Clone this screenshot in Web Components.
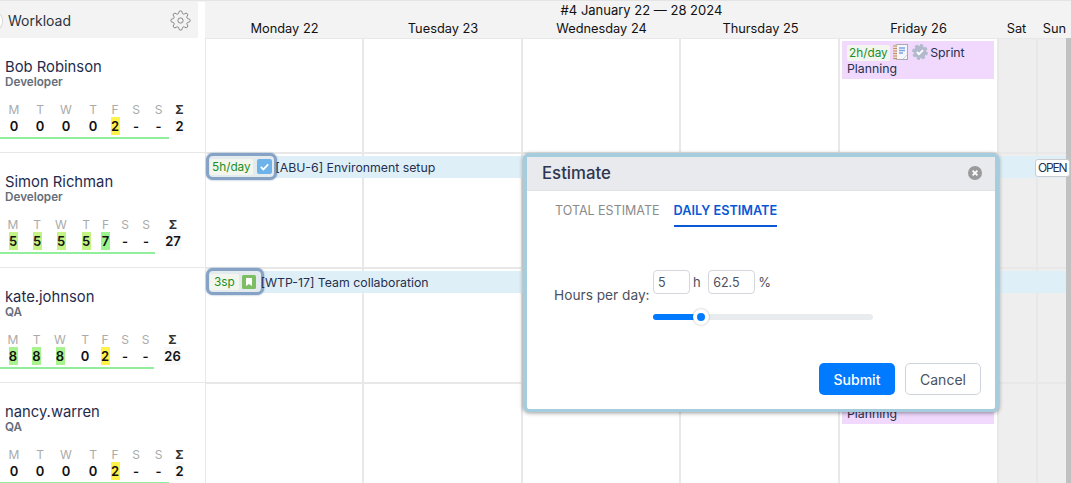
<!DOCTYPE html>
<html>
<head>
<meta charset="utf-8">
<title>Workload</title>
<style>
  html, body { margin: 0; padding: 0; width: 1071px; height: 483px; overflow: hidden; background: #fff; }
  body { font-family: Inter, "Liberation Sans", sans-serif; color: #1f2b4d; }
</style>
</head>
<body>
<workload-app></workload-app>
<script>
// column widths: header labels sit a little off the grid lines below them
var HEAD_COLS = "205px 159px 158px 159px 159px 157px 39px";
var DAY_COLS = "157px 159px 158px 159px 159px 39px";
var COLS = "205px " + DAY_COLS;

class WorkloadHeader extends HTMLElement {
  constructor() {
    super();
    this.attachShadow({ mode: "open" });
    var days = ["Monday 22", "Tuesday 23", "Wednesday 24", "Thursday 25", "Friday 26", "Sat", "Sun"];
    this.shadowRoot.innerHTML =
      '<style>' +
      ':host{display:grid;grid-template-columns:' + HEAD_COLS + ' 1fr;height:38px;background:#f3f3f3;border-top:1px solid #e4e4e4;box-sizing:border-box;position:relative;font-size:13px;color:#111}' +
      '.left{grid-row:1;grid-column:1;background:#f3f3f3;margin:1px 7px 0 1px;display:flex;align-items:center;justify-content:space-between;padding:0 7px;font-size:14px;color:#2c3340;position:relative}' +
      '.gap{position:absolute;right:-7px;top:0;bottom:0;width:7px;background:#fff}' +
      '.arc{position:absolute;left:-8px;top:11px;width:8px;height:14px;border:1px solid #d8d8d8;border-radius:50%;background:#fff}' +
      'svg{display:block}' +
      '.title{position:absolute;left:205px;right:0;top:1px;text-align:center;line-height:16px;padding-left:7px}' +
      '.d{grid-row:1;align-self:end;text-align:center;line-height:16px;padding-bottom:1px;font-size:12.8px}' +
      '.d:last-child{padding-left:2px}' +
      '</style>' +
      '<div class="left"><span>Workload</span><i class="arc"></i><i class="gap"></i>' +
      '<svg width="21" height="21" viewBox="0 0 24 24" fill="none" stroke="#777" stroke-width="1"><circle cx="12" cy="12" r="3"/><path d="M19.4 15a1.65 1.65 0 0 0 .33 1.82l.06.06a2 2 0 0 1 0 2.83 2 2 0 0 1-2.83 0l-.06-.06a1.65 1.65 0 0 0-1.82-.33 1.65 1.65 0 0 0-1 1.51V21a2 2 0 0 1-2 2 2 2 0 0 1-2-2v-.09A1.65 1.65 0 0 0 9 19.4a1.65 1.65 0 0 0-1.82.33l-.06.06a2 2 0 0 1-2.83 0 2 2 0 0 1 0-2.83l.06-.06a1.65 1.65 0 0 0 .33-1.82 1.65 1.65 0 0 0-1.51-1H3a2 2 0 0 1-2-2 2 2 0 0 1 2-2h.09A1.65 1.65 0 0 0 4.6 9a1.65 1.65 0 0 0-.33-1.82l-.06-.06a2 2 0 0 1 0-2.83 2 2 0 0 1 2.83 0l.06.06a1.65 1.65 0 0 0 1.82.33H9a1.65 1.65 0 0 0 1-1.51V3a2 2 0 0 1 2-2 2 2 0 0 1 2 2v.09a1.65 1.65 0 0 0 1 1.51 1.65 1.65 0 0 0 1.82-.33l.06-.06a2 2 0 0 1 2.83 0 2 2 0 0 1 0 2.83l-.06.06a1.65 1.65 0 0 0-.33 1.82V9a1.65 1.65 0 0 0 1.51 1H21a2 2 0 0 1 2 2 2 2 0 0 1-2 2h-.09a1.65 1.65 0 0 0-1.51 1z"/></svg></div>' +
      '<div class="title">#4 January 22 \u2014 28 2024</div>' +
      days.map(function (d, i) { return '<div class="d" style="grid-column:' + (i + 2) + '">' + d + '</div>'; }).join("");
  }
}
customElements.define("workload-header", WorkloadHeader);

class UserSummary extends HTMLElement {
  constructor() { super(); this.attachShadow({ mode: "open" }); }
  connectedCallback() {
    var vals = this.getAttribute("values").split(",");
    var cols = this.getAttribute("cols");
    var total = this.getAttribute("total");
    var letters = ["M", "T", "W", "T", "F", "S", "S"];
    var html = '<style>' +
      ':host{display:flex;align-items:flex-start;height:37px}' +
      '.days{display:grid;grid-template-columns:' + cols + ';border-bottom:2px solid #90ee9c;padding-bottom:2px;grid-template-rows:15px 18px}' +
      '.l{text-align:center;font-size:12px;color:#aaa;line-height:15px}' +
      '.v{text-align:center;font-size:13px;font-weight:600;color:#111;line-height:18px}' +
      '.v span{display:inline-block;min-width:9px;height:18px}' +
      '.y{background:#fff34a}.g{background:#c4f283}.s{background:#9bf58f}.e{background:#a8f38e}' +
      '.sum{text-align:center;width:' + this.getAttribute("sumw") + 'px;margin-left:' + this.getAttribute("sumgap") + 'px}' +
      '.sum b{display:block;font-size:12px;line-height:15px;color:#333}' +
      '.sum span{display:block;height:18px;line-height:18px;background:#f8f8f8;font-size:13px;font-weight:600;color:#111}' +
      '</style><div class="days">';
    letters.forEach(function (l) { html += '<div class="l">' + l + '</div>'; });
    vals.forEach(function (v) {
      var c = v === "2" ? "y" : v === "5" ? "g" : v === "7" ? "s" : v === "8" ? "e" : "";
      html += '<div class="v"><span class="' + c + '">' + v + '</span></div>';
    });
    html += '</div><div class="sum"><b>\u03a3</b><span>' + total + '</span></div>';
    this.shadowRoot.innerHTML = html;
  }
}
customElements.define("user-summary", UserSummary);

class WorkloadRow extends HTMLElement {
  constructor() {
    super();
    this.attachShadow({ mode: "open" });
    var cells = "";
    for (var i = 0; i < 7; i++) {
      cells += '<div class="c' + (i > 4 ? " we" : "") + (i === 0 ? " first" : "") + '" style="grid-column:' + (i + 2) + '"></div>';
    }
    this.shadowRoot.innerHTML =
      '<style>' +
      ':host{display:grid;grid-template-columns:' + COLS + ' 1fr;grid-template-rows:115px;font-family:Inter,"Liberation Sans",sans-serif}' +
      '.u{grid-column:1;grid-row:1;border-bottom:1px solid #e8e8e8;box-sizing:border-box;padding-top:21px}' +
      '.n{padding-left:5px;font-size:14.8px;line-height:16px;color:#1f2b4d}' +
      '.r{padding-left:5px;font-size:11.7px;font-weight:600;line-height:14px;color:#666d7a;margin-bottom:13px}' +
      '.c{grid-row:1;border-bottom:1px solid #e8e8e8;border-left:2px solid #e8e8e8;border-top:1px solid #e8e8e8;box-sizing:border-box}' +
      '.first{border-left-width:1px}' +
      '.we{background:#eee;border-left-color:#e8e8e8}' +
      '.e{grid-column:2/-1;grid-row:1;position:relative;display:grid;grid-template-columns:' + DAY_COLS + ' 1fr;align-items:start;align-content:start}' +
      '</style>' +
      '<div class="u"><div class="n"></div><div class="r"></div><slot name="summary"></slot></div>' +
      cells +
      '<div class="e"><slot></slot></div>';
  }
  connectedCallback() {
    this.shadowRoot.querySelector(".n").textContent = this.getAttribute("name");
    this.shadowRoot.querySelector(".r").textContent = this.getAttribute("role");
  }
}
customElements.define("workload-row", WorkloadRow);

class EstTag extends HTMLElement {
  constructor() {
    super();
    this.attachShadow({ mode: "open" });
    this.shadowRoot.innerHTML =
      '<style>:host{display:inline-block;font-size:11.8px;line-height:16px;color:#1b8f1f;background:#f2f6ee;padding:0 2px;border-radius:2px;white-space:nowrap}</style><slot></slot>';
  }
}
customElements.define("est-tag", EstTag);

class TaskBar extends HTMLElement {
  constructor() {
    super();
    this.attachShadow({ mode: "open" });
    this.shadowRoot.innerHTML =
      '<style>' +
      ':host{display:flex;align-items:center;grid-column:1/-1;height:22px;margin:3px 0 0 2px;background:#dfeff8;position:relative;font-size:12.3px;color:#25304f;white-space:nowrap}' +
      '.ring{display:flex;align-items:center;gap:3px;border:3px solid #86a2c5;border-radius:7px;background:#e3ebee;padding:0 2px 0 1px;margin:-3px var(--after,-1.5px) 0 -1px;height:21px;align-self:flex-start;box-shadow:0 0 2px #7f9cc0;flex:none}' +
      '.txt{padding-top:1px}' +
      '::slotted([slot=status]){position:absolute;right:-4px;top:3px}' +
      '</style><div class="ring"><slot name="tag"></slot><slot name="icon"></slot></div><span class="txt"><slot></slot></span><slot name="status"></slot>';
  }
}
customElements.define("task-bar", TaskBar);

class EventCard extends HTMLElement {
  constructor() {
    super();
    this.attachShadow({ mode: "open" });
    this.shadowRoot.innerHTML =
      '<style>:host{display:block;grid-column:5;margin:3px 3px 0 4px;background:#f0d9fd;padding:3px 5px 2px;height:38px;box-sizing:border-box;font-size:12.3px;line-height:16px;color:#25304f}' +
      'svg{vertical-align:-3px}</style>' +
      '<slot name="tag"></slot> ' +
      '<svg width="15" height="16" viewBox="0 0 15 16"><rect x="3" y=".5" width="11.5" height="15" fill="#f4f6fa" stroke="#a9a9b4"/><rect x=".5" y=".5" width="3" height="15" fill="#ecdccc"/><path d="M0 2h4M0 4.5h4M0 7h4M0 9.5h4M0 12h4M0 14.5h4" stroke="#c07a48" stroke-width=".8"/><path d="M6 4h6M6 6.5h6M6 9h4" stroke="#7ba5e6" stroke-width="1.5"/><path d="M10 15l4-4" stroke="#cfcfd8"/></svg> ' +
      '<svg width="16" height="16" viewBox="0 0 16 16" style="margin-right:-1px"><circle cx="8" cy="8" r="6.4" fill="#b3b9cc"/><circle cx="8" cy="8" r="6.9" fill="none" stroke="#b3b9cc" stroke-width="2" stroke-dasharray="3.2 2.2"/><path d="M4.8 8l2.2 2.2 4-4" fill="none" stroke="#fff" stroke-width="1.8"/></svg> ' +
      '<slot></slot>';
  }
}
customElements.define("event-card", EventCard);

class EstimateDialog extends HTMLElement {
  constructor() {
    super();
    this.attachShadow({ mode: "open" });
    this.shadowRoot.innerHTML =
      '<style>' +
      ':host{position:absolute;left:523px;top:153px;width:476px;height:259px;box-sizing:border-box;border:solid #a5cddd;border-width:4px 4px 3px 4px;border-radius:6px;background:#fff;box-shadow:0 1px 4px rgba(0,0,0,.4);font-family:Inter,"Liberation Sans",sans-serif;display:flex;flex-direction:column;color:#4a5160}' +
      '.head{background:#e9eaee;border-bottom:1px solid #e2e3e7;display:flex;align-items:center;justify-content:space-between;padding:0 13px 2px 15px;font-size:16.8px;font-weight:500;color:#2c3650;flex:none;height:31px}' +
      '.x{width:14px;height:14px;border-radius:50%;background:#9a9a9a;display:block}' +
      '.x svg{display:block}' +
      '.tabs{display:flex;gap:14px;padding:0 0 0 28px;height:36px;flex:none;font-size:12.5px;align-items:flex-end}' +
      '.tab{color:#8a8a8a;height:26px;line-height:20px;box-sizing:border-box;white-space:nowrap}' +
      '.tab.on{color:#0a58d6;font-weight:600;border-bottom:2px solid #0a58d6;font-size:12.7px}' +
      '.form{display:flex;align-items:flex-start;padding:43px 0 0 27px;font-size:13.7px;flex:none}' +
      '.lab{padding-top:17px;width:99px;line-height:16px;white-space:nowrap}' +
      '.in{display:flex;align-items:center;gap:3px}' +
      'input{width:37px;height:24px;box-sizing:border-box;border:1px solid #d5d7dc;border-radius:4px;font:12.5px Inter,"Liberation Sans",sans-serif;color:#4a5160;padding:0 4px;outline:none;background:#fff}' +
      'input.p{width:47px}' +
      '.u{margin-right:4.5px;margin-top:-1px;font-size:13px}' +
      '.slider{width:220px;height:6px;background:#e9ecef;border-radius:3px;margin-top:20px;position:relative}' +
      '.fill{width:48px;height:6px;background:#007bff;border-radius:3px}' +
      '.knob{position:absolute;left:40px;top:-5px;width:16px;height:16px;box-sizing:border-box;border:4px solid #fff;background:#007bff;border-radius:50%;box-shadow:0 0 2px rgba(0,0,0,.35)}' +
      '.foot{margin-top:auto;display:flex;justify-content:flex-end;gap:10px;padding:0 14px 14px 0}' +
      'button{width:76px;height:32px;border-radius:5px;font:500 14px Inter,"Liberation Sans",sans-serif;box-sizing:border-box;padding:0}' +
      '.pri{background:#007bff;border:0;color:#fff}' +
      '.sec{background:#fff;border:1px solid #cfd3dc;color:#4a5160;font-weight:400}' +
      '</style>' +
      '<div class="head"><span>Estimate</span><i class="x"><svg width="14" height="14" viewBox="0 0 14 14"><path d="M4.6 4.6l4.8 4.8M9.4 4.6l-4.8 4.8" stroke="#fff" stroke-width="1.8"/></svg></i></div>' +
      '<div class="tabs"><div class="tab">TOTAL ESTIMATE</div><div class="tab on">DAILY ESTIMATE</div></div>' +
      '<div class="form"><div class="lab">Hours per day:</div><div>' +
      '<div class="in"><input value="5"><span class="u">h</span><input class="p" value="62.5"><span class="u">%</span></div>' +
      '<div class="slider"><div class="fill"></div><div class="knob"></div></div>' +
      '</div></div>' +
      '<div class="foot"><button class="pri">Submit</button><button class="sec">Cancel</button></div>';
  }
}
customElements.define("estimate-dialog", EstimateDialog);

class WorkloadApp extends HTMLElement {
  constructor() {
    super();
    this.attachShadow({ mode: "open" });
    var sprint = '<event-card><est-tag slot="tag">2h/day</est-tag><span>Sprint</span> <span>Planning</span></event-card>';
    var checkIcon = '<svg slot="icon" width="15" height="15" viewBox="0 0 15 15" style="margin-left:1px"><rect width="15" height="15" rx="2" fill="#6db3ea"/><path d="M3.8 7.8l2.6 2.6 4.8-5" fill="none" stroke="#fff" stroke-width="1.8"/></svg>';
    var storyIcon = '<svg slot="icon" width="14" height="14" viewBox="0 0 14 14" style="margin-right:3px"><rect width="14" height="14" rx="1.5" fill="#7dbd63"/><path d="M4 3h6v8l-3-2-3 2z" fill="#fff"/></svg>';
    this.shadowRoot.innerHTML =
      '<style>' +
      ':host{display:block;width:1071px;height:483px;position:relative;overflow:hidden}' +
      '.body{display:flex;height:445px;overflow:hidden}' +
      '.rows{width:1066px;flex:none}' +
      '.scroll{flex:1;background:#c1c1c1}' +
      'span.open{font-size:12px;letter-spacing:-1.2px;line-height:16px;background:#fff;border:1px solid #ccc;border-radius:3px;color:#25304f;width:33px;overflow:hidden;display:block;text-indent:2px}' +
      '</style>' +
      '<workload-header></workload-header>' +
      '<div class="body"><div class="rows">' +
      '<workload-row name="Bob Robinson" role="Developer">' + sprint +
      '<user-summary slot="summary" values="0,0,0,0,2,-,-" total="2" cols="28px 24px 28px 26px 18px 24px 21px" sumw="9" sumgap="6"></user-summary></workload-row>' +
      '<workload-row name="Simon Richman" role="Developer">' +
      '<task-bar><est-tag slot="tag">5h/day</est-tag>' + checkIcon + '[ABU-6] Environment setup<span slot="status" class="open">OPEN</span></task-bar>' +
      '<user-summary slot="summary" values="5,5,5,5,7,-,-" total="27" cols="26px 22px 26px 24px 15px 24px 18px" sumw="16" sumgap="10"></user-summary></workload-row>' +
      '<workload-row name="kate.johnson" role="QA">' +
      '<task-bar style="--after:-3.3px"><est-tag slot="tag" style="padding:0 4px">3sp</est-tag>' + storyIcon + '[WTP-17] Team collaboration</task-bar>' +
      '<user-summary slot="summary" values="8,8,8,0,2,-,-" total="26" cols="26px 21px 26px 24px 16px 24px 17px" sumw="17" sumgap="10"></user-summary></workload-row>' +
      '<workload-row name="nancy.warren" role="QA">' + sprint +
      '<user-summary slot="summary" values="0,0,0,0,2,-,-" total="2" cols="28px 24px 28px 26px 18px 24px 21px" sumw="9" sumgap="6"></user-summary></workload-row>' +
      '</div><div class="scroll"></div></div>' +
      '<estimate-dialog></estimate-dialog>';
  }
}
customElements.define("workload-app", WorkloadApp);
</script>
</body>
</html>
